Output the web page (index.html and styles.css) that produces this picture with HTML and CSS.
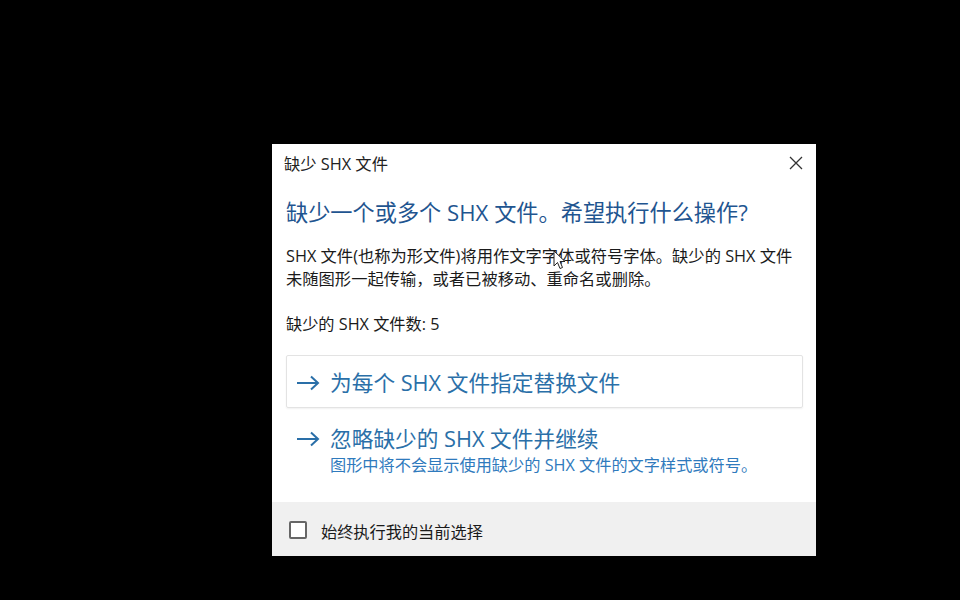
FILE: index.html
```html
<!DOCTYPE html>
<html lang="zh-CN">
<head>
<meta charset="utf-8">
<title>缺少 SHX 文件</title>
<link rel="stylesheet" href="styles.css">
</head>
<body>
<div class="stage">
  <div class="dialog">
    <div class="titlebar">
      <span class="title">缺少 SHX 文件</span>
      <svg class="close" width="14" height="14" viewBox="0 0 14 14"><path d="M1 1 L13 13 M13 1 L1 13" stroke="#333" stroke-width="1.3" fill="none"/></svg>
    </div>
    <div class="content">
      <h1 class="heading">缺少一个或多个 SHX 文件。希望执行什么操作?</h1>
      <p class="para">SHX 文件(也称为形文件)将用作文字字体或符号字体。缺少的 SHX 文件<br>未随图形一起传输，或者已被移动、重命名或删除。</p>
      <p class="count">缺少的 SHX 文件数: 5</p>
      <div class="cmd cmd-hover">
        <svg class="arrow" width="24" height="16" viewBox="0 0 24 16"><path d="M1 8 H22 M15 1.5 L22 8 L15 14.5" stroke="#2a6fa8" stroke-width="2" fill="none"/></svg>
        <div class="cmd-text"><div class="cmd-main">为每个 SHX 文件指定替换文件</div></div>
      </div>
      <div class="cmd cmd-plain">
        <svg class="arrow" width="24" height="16" viewBox="0 0 24 16"><path d="M1 8 H22 M15 1.5 L22 8 L15 14.5" stroke="#2a6fa8" stroke-width="2" fill="none"/></svg>
        <div class="cmd-text">
          <div class="cmd-main">忽略缺少的 SHX 文件并继续</div>
          <div class="cmd-sub">图形中将不会显示使用缺少的 SHX 文件的文字样式或符号。</div>
        </div>
      </div>
    </div>
    <div class="footer">
      <span class="checkbox"></span>
      <span class="footer-label">始终执行我的当前选择</span>
    </div>
    <svg class="cursor" width="13" height="20" viewBox="0 0 13 20"><path d="M1 1 L1 16 L4.5 12.5 L7 18.5 L9.5 17.5 L7 11.5 L12 11.5 Z" fill="#fff" stroke="#222" stroke-width="1"/></svg>
  </div>
</div>
</body>
</html>
```
FILE: styles.css
```css
html, body {
  margin: 0;
  padding: 0;
  background: #000;
  width: 960px;
  height: 600px;
  overflow: hidden;
}
.stage {
  padding-top: 144px;
  padding-left: 272px;
}
.dialog {
  position: relative;
  width: 544px;
  height: 412px;
  background: #fff;
  display: flex;
  flex-direction: column;
  font-family: "Open Sans", "Noto Sans CJK SC", sans-serif;
  color: #1a1a1a;
}
.titlebar {
  height: 38px;
  display: flex;
  align-items: center;
  justify-content: space-between;
  padding: 0 13px 0 12px;
}
.title {
  font-size: 16.3px;
  color: #222;
}
.close {
  display: block;
}
.content {
  padding: 0 13px 0 14px;
}
.heading {
  margin: 16px 0 0 0;
  font-size: 22.2px;
  line-height: 30px;
  font-weight: normal;
  color: #1f5590;
  white-space: nowrap;
}
.para {
  margin: 17px 0 0 0;
  font-size: 16.3px;
  line-height: 23px;
  white-space: nowrap;
}
.count {
  margin: 22px 0 0 0;
  font-size: 16.2px;
  line-height: 23px;
}
.cmd {
  display: flex;
  align-items: flex-start;
  gap: 10px;
  padding-left: 9px;
  border: 1px solid transparent;
  border-radius: 2px;
}
.cmd-hover {
  margin-top: 19px;
  height: 51px;
  align-items: center;
  border-color: #e3e3e3;
  box-shadow: 0 1px 2px rgba(0,0,0,0.06);
}
.cmd-hover .cmd-main {
  padding-top: 3px;
}
.cmd-plain {
  margin-top: 16px;
}
.arrow {
  display: block;
  flex: none;
}
.cmd-hover .arrow {
  margin-top: 2px;
}
.cmd-plain .arrow {
  margin-top: 6px;
}
.cmd-main {
  font-size: 21.7px;
  line-height: 28px;
  color: #2a6fa8;
  white-space: nowrap;
}
.cmd-sub {
  margin-top: 1px;
  font-size: 16.2px;
  line-height: 22px;
  color: #2f7abd;
  white-space: nowrap;
}
.footer {
  margin-top: auto;
  height: 54px;
  background: #f0f0f0;
  display: flex;
  align-items: center;
  padding-left: 17px;
  gap: 14px;
}
.checkbox {
  width: 14px;
  height: 14px;
  border: 2px solid #666;
  border-radius: 2px;
  background: #fff;
  margin-top: 2px;
}
.footer-label {
  font-size: 16.2px;
  color: #1a1a1a;
  padding-top: 3px;
}
.cursor {
  position: absolute;
  left: 281px;
  top: 106px;
}
```
